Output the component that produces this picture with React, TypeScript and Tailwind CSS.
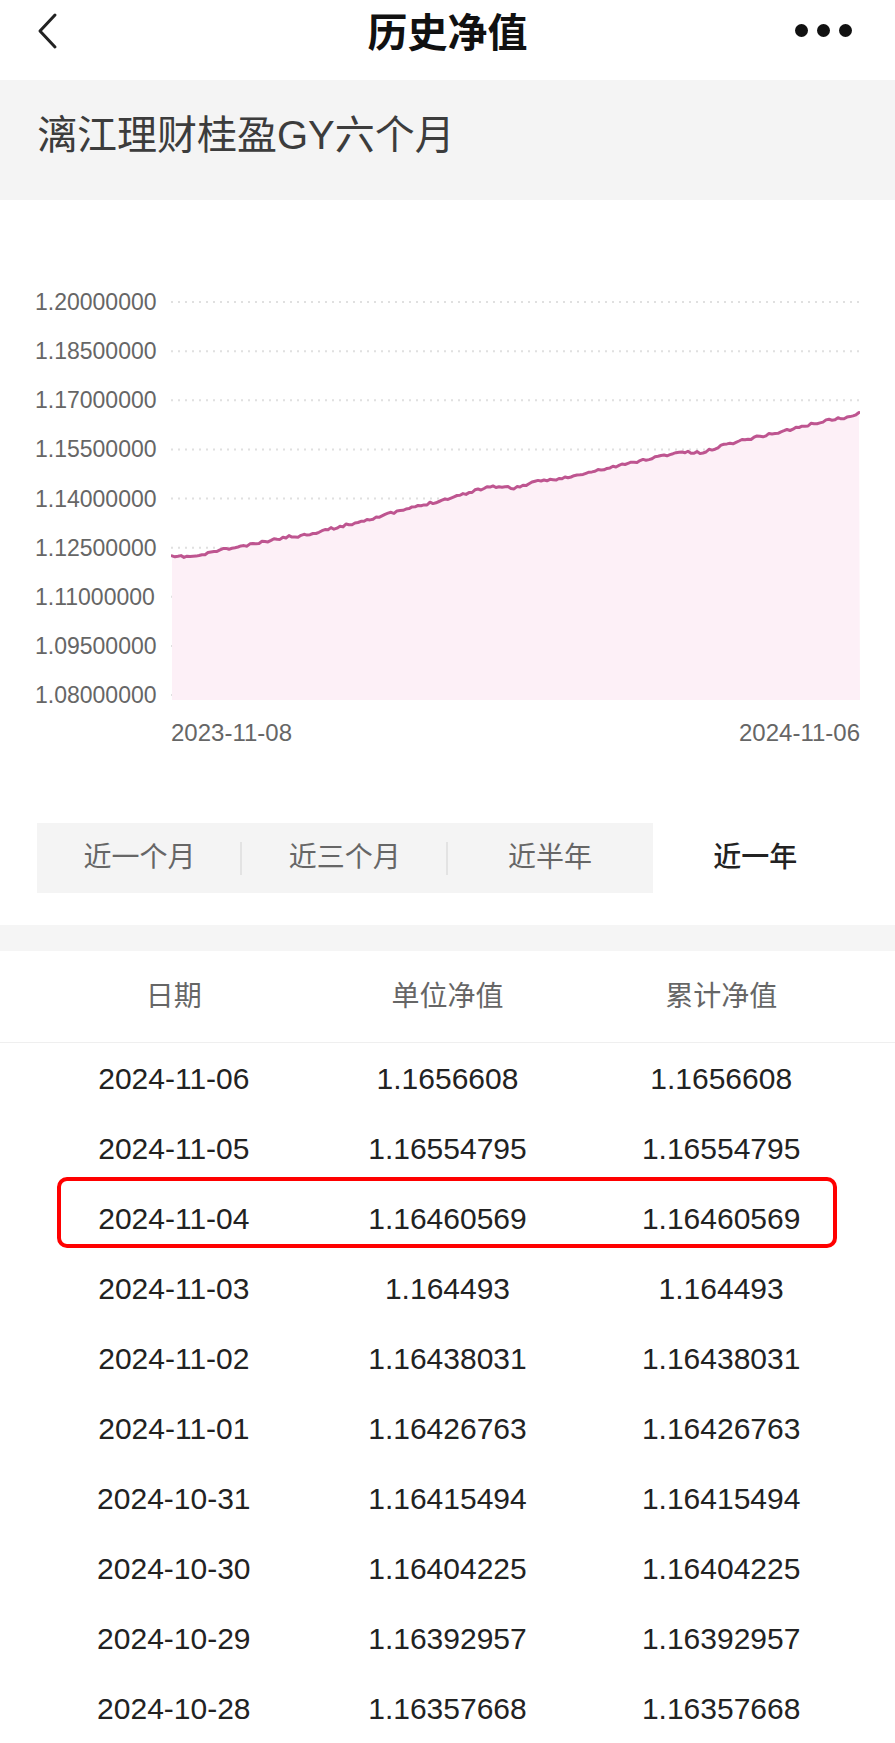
import React from 'react';

const font = { fontFamily: '"Liberation Sans", "Noto Sans CJK SC", sans-serif' };

const yLabels = [
  '1.20000000',
  '1.18500000',
  '1.17000000',
  '1.15500000',
  '1.14000000',
  '1.12500000',
  '1.11000000',
  '1.09500000',
  '1.08000000',
];

const rows = [
  ['2024-11-06', '1.1656608', '1.1656608'],
  ['2024-11-05', '1.16554795', '1.16554795'],
  ['2024-11-04', '1.16460569', '1.16460569'],
  ['2024-11-03', '1.164493', '1.164493'],
  ['2024-11-02', '1.16438031', '1.16438031'],
  ['2024-11-01', '1.16426763', '1.16426763'],
  ['2024-10-31', '1.16415494', '1.16415494'],
  ['2024-10-30', '1.16404225', '1.16404225'],
  ['2024-10-29', '1.16392957', '1.16392957'],
  ['2024-10-28', '1.16357668', '1.16357668'],
];

// rough trace of the curve, page coords
const KEY: [number, number][] = [
  [172, 557], [200, 556], [215, 551], [250, 545], [286, 537], [300, 536],
  [343, 526], [400, 511], [450, 498], [491, 486], [500, 487], [514, 488],
  [540, 481], [571, 477], [600, 470], [657, 457], [680, 452], [703, 453],
  [720, 446], [743, 440], [780, 432], [829, 420], [850, 417], [858, 414], [860, 411],
];

function buildLine() {
  let seed = 11;
  const rnd = () => {
    seed = (seed * 16807) % 2147483647;
    return seed / 2147483647;
  };
  const pts: string[] = [];
  for (let x = 172; x <= 860; x += 3) {
    let i = 0;
    while (i < KEY.length - 2 && KEY[i + 1][0] < x) i++;
    const [x0, y0] = KEY[i];
    const [x1, y1] = KEY[i + 1];
    const t = Math.min(1, Math.max(0, (x - x0) / (x1 - x0)));
    const y = y0 + (y1 - y0) * t + (x < 855 ? (rnd() - 0.5) * 2.4 : 0);
    pts.push(`${(x - 171).toFixed(1)} ${(y - 292).toFixed(1)}`);
  }
  return pts;
}

function Chart() {
  const pts = buildLine();
  const line = 'M' + pts.join(' L');
  const area = line + ' L689 408 L1 408 Z';
  const grid = yLabels.map((_, i) => 10 + i * 49.125);

  return (
    <div className="pt-[92px]">
      <div className="flex pl-[35px]">
        <div className="flex flex-col justify-between h-[413px] w-[124px] text-[23px] text-[#666]">
          {yLabels.map((l) => (
            <div key={l} className="h-[20px] leading-[20px]">
              {l}
            </div>
          ))}
        </div>
        <svg width="689" height="413" className="ml-[12px] block">
          {grid.map((y) => (
            <line key={y} x1="0" x2="689" y1={y} y2={y} stroke="#e0e0e0" strokeWidth="2" strokeDasharray="2 5" />
          ))}
          <path d={area} fill="#fdf0f7" />
          <path d={line} fill="none" stroke="#be5590" strokeWidth="3" strokeLinejoin="round" strokeLinecap="round" />
        </svg>
      </div>
      <div className="flex justify-between ml-[171px] mr-[35px] mt-[14px] h-[28px] leading-[28px] text-[24px] text-[#666]">
        <span>2023-11-08</span>
        <span>2024-11-06</span>
      </div>
    </div>
  );
}

function Tabs() {
  const tabs = ['近一个月', '近三个月', '近半年', '近一年'];
  return (
    <div className="mx-[37px] mt-[76px] grid grid-cols-4 h-[70px]">
      {tabs.map((t, i) => {
        const active = i === 3;
        return (
          <div
            key={t}
            className={
              active
                ? 'flex items-center justify-center bg-white text-[28px] text-[#222] font-medium'
                : 'relative flex items-center justify-center bg-[#f4f4f4] text-[28px] text-[#666]'
            }
          >
            {t}
            {i < 2 && <span className="absolute right-0 top-[19px] h-[33px] w-[2px] bg-[#e3e3e3]" />}
          </div>
        );
      })}
    </div>
  );
}

function Table() {
  return (
    <div>
      <div className="grid grid-cols-3 px-[37px] h-[92px] items-center text-center text-[28px] text-[#666] border-b border-[#efefef]">
        <div>日期</div>
        <div>单位净值</div>
        <div>累计净值</div>
      </div>
      <div className="px-[37px]">
        {rows.map((r, i) => (
          <div key={r[0]} className="relative grid grid-cols-3 h-[70px] items-center text-center text-[30px] text-[#222]">
            <div>{r[0]}</div>
            <div>{r[1]}</div>
            <div>{r[2]}</div>
            {i === 2 && (
              <div className="absolute left-[20px] right-[21px] top-[-6px] bottom-[5px] border-[4px] border-[#ff0000] rounded-[10px]" />
            )}
          </div>
        ))}
      </div>
    </div>
  );
}

export default function App() {
  return (
    <div className="w-[895px] bg-white overflow-hidden" style={font}>
      {/* nav bar */}
      <div className="relative flex items-center justify-center h-[80px] pb-[14px]">
        <svg width="26" height="40" viewBox="0 0 26 40" className="absolute left-[34px] top-[11px]">
          <path d="M21 4 L6 20 L21 36" fill="none" stroke="#222" strokeWidth="3" strokeLinecap="round" strokeLinejoin="round" />
        </svg>
        <div className="text-[40px] font-bold text-[#111] leading-none">历史净值</div>
        <div className="absolute right-[43px] top-[24px] flex gap-[9px]">
          <span className="w-[13px] h-[13px] rounded-full bg-[#111]" />
          <span className="w-[13px] h-[13px] rounded-full bg-[#111]" />
          <span className="w-[13px] h-[13px] rounded-full bg-[#111]" />
        </div>
      </div>

      {/* product name */}
      <div className="h-[120px] bg-[#f4f4f4] flex items-center pl-[37px] pb-[10px]">
        <span className="text-[40px] text-[#3c3c3c] leading-none">漓江理财桂盈GY六个月</span>
      </div>

      <Chart />
      <Tabs />

      <div className="mt-[32px] h-[26px] bg-[#f5f5f5]" />

      <Table />
    </div>
  );
}
